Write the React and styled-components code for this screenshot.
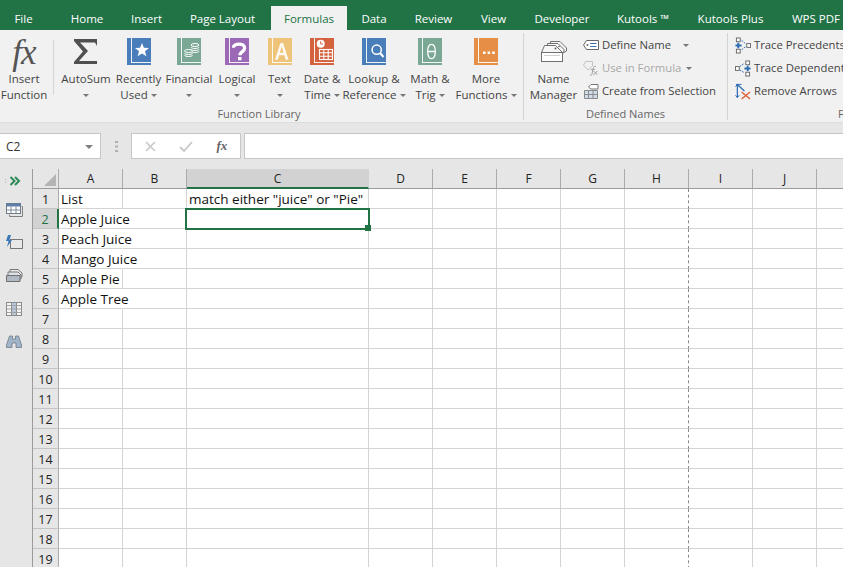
import React from "react";
import styled, { createGlobalStyle } from "styled-components";

const Global = createGlobalStyle`
  html, body { margin: 0; padding: 0; width: 843px; height: 567px; overflow: hidden; background: #fff; }
  * { box-sizing: border-box; }
  #root { width: 843px; height: 567px; overflow: hidden; }
`;
const ui = `"Open Sans", "Noto Sans", sans-serif`;

const Page = styled.div`width: 843px; height: 567px; display: flex; flex-direction: column; overflow: hidden; font-family: ${ui}; color: #444;`;

const TabBar = styled.div`height: 30px; flex: none; background: #217346; display: flex; align-items: flex-end; overflow: hidden;`;
const Tab = styled.div`
  flex: none; width: ${p => p.$w}px; height: ${p => (p.$active ? 24 : 30)}px; margin-right: ${p => p.$mr || 0}px;
  display: flex; align-items: center; justify-content: center; white-space: nowrap; font-size: 11.5px;
  padding-top: ${p => (p.$active ? 0 : p.$file ? 7 : 6)}px;
  color: ${p => (p.$active ? "#217346" : "#fff")}; background: ${p => (p.$active ? "#f1f1f1" : "transparent")};
`;

const Ribbon = styled.div`height: 93px; flex: none; background: #f1f1f1; border-bottom: 1px solid #dcdcdc; display: flex;`;
const Group = styled.div`flex: none; width: ${p => p.$w}px; min-width: 0; display: flex; flex-direction: column; border-right: ${p => (p.$sep ? "1px solid #d4d4d4" : "none")}; margin: 3px 0 2px;`;
const GroupBody = styled.div`height: 75px; flex: none; display: flex;`;
const GroupLabel = styled.div`font-size: 11px; line-height: 12px; color: #666; text-align: ${p => (p.$left ? "left" : "center")}; padding-left: ${p => p.$pl || 0}px; padding-right: ${p => p.$pr || 0}px; white-space: nowrap;`;
const Stack = styled.div`flex: none; display: flex; flex-direction: column; width: ${p => p.$w}px;`;
const Big = styled.div`flex: none; width: ${p => p.$w}px; display: flex; flex-direction: column; align-items: center; font-size: 11.5px; line-height: 16px; color: #444; white-space: nowrap;`;
const BigIcon = styled.div`height: 38px; padding-top: ${p => p.$top || 5}px; flex: none; display: flex; align-items: flex-start; justify-content: center;`;
const FxGlyph = styled.span`font-family: "Liberation Serif", serif; font-style: italic; font-size: 35px; line-height: 30px; color: #555; letter-spacing: -1px;`;
const Divider = styled.div`flex: none; width: 1px; height: 55px; margin: 7px 5px 0 5px; background: #d4d4d4;`;
const Line = styled.div`height: 16px; display: flex; align-items: center; gap: 3px;`;
const Caret = styled.span`display: inline-block; width: 0; height: 0; border-left: 3px solid transparent; border-right: 3px solid transparent; border-top: 3px solid #777; margin-top: 1px;`;
const NameCaret = styled(Caret)`border-left-width: 4px; border-right-width: 4px; border-top-width: 4px; border-top-color: #808080;`;
const SmallRow = styled.div`height: 23px; display: flex; align-items: center; font-size: 11.3px; white-space: nowrap; gap: 3px; padding-left: ${p => p.$pl || 0}px; color: ${p => (p.$off ? "#a8a8a8" : "#444")};`;
const SmallIcon = styled.span`width: 16px; height: 16px; flex: none; display: flex;`;
const SmallCaret = styled(Caret)`margin-left: ${p => p.$ml || 2}px;`;

const FormulaBar = styled.div`height: 46px; flex: none; background: #e6e6e6; display: flex; align-items: flex-start; padding-top: 10px;`;
const NameBox = styled.div`width: 101px; height: 26px; flex: none; background: #fff; border: 1px solid #c6c6c6; border-left: none; display: flex; align-items: center; justify-content: space-between; padding: 0 7px 0 6px; font-size: 12px; color: #333;`;
const Grip = styled.div`width: 30px; flex: none; height: 26px; display: flex; align-items: center; justify-content: center;`;
const FxButtons = styled.div`width: 110px; height: 26px; flex: none; background: #fff; border: 1px solid #c6c6c6; display: flex; align-items: center; justify-content: space-around; padding: 0 1px;`;
const FxSmall = styled.span`font-family: "Liberation Serif", serif; font-style: italic; font-weight: bold; font-size: 13px; color: #666;`;
const FormulaInput = styled.div`flex: 1; height: 26px; margin-left: 3px; background: #fff; border: 1px solid #c6c6c6; border-right: none;`;

const Main = styled.div`flex: 1; display: flex; min-height: 0;`;
const Side = styled.div`width: 33px; flex: none; background: #e6e6e6; border-right: 1px solid #9b9b9b; display: flex; flex-direction: column; align-items: center;`;
const SideIcon = styled.div`height: ${p => p.$h || 33}px; flex: none; display: flex; align-items: center; justify-content: center; padding-right: 4px;`;
const Sheet = styled.div`flex: 1; overflow: hidden; font-family: ${ui}; background: #fff;`;
const Row = styled.div`display: flex; height: 20px;`;
const Corner = styled.div`width: 26px; flex: none; height: 20px; background: #e6e6e6; border-right: 1px solid #ababab; border-bottom: 1px solid #9b9b9b; display: flex; justify-content: flex-end; align-items: flex-end; padding: 0 2px 2px 0;`;
const ColHead = styled.div`
  flex: none; width: ${p => p.$w}px; height: 20px; display: flex; align-items: center; justify-content: center; font-size: 12px; color: #222;
  background: ${p => (p.$sel ? "#d2d2d2" : "#e6e6e6")};
  border-right: 1px solid ${p => (p.$sel ? "#d2d2d2" : "#ababab")};
  border-bottom: ${p => (p.$sel ? "2px solid #217346" : "1px solid #9b9b9b")};
`;
const RowHead = styled.div`
  width: 26px; flex: none; height: 20px; display: flex; align-items: center; justify-content: center; font-size: 12.5px; padding-top: 1px;
  color: ${p => (p.$sel ? "#217346" : "#222")}; background: ${p => (p.$sel ? "#d2d2d2" : "#e6e6e6")};
  border-right: ${p => (p.$sel ? "2px solid #217346" : "1px solid #ababab")}; border-bottom: 1px solid #c4c4c4;
`;
const Cell = styled.div`
  flex: none; width: ${p => p.$w}px; height: 20px; position: relative; font-size: 13.5px; line-height: 20px; padding-left: 2px; white-space: nowrap; color: #111;
  border-bottom: 1px solid #d4d4d4;
  border-right: ${p => (p.$spill ? "1px solid transparent" : p.$brk ? "1px dashed #8a8a8a" : "1px solid #d4d4d4")};
`;
const Selection = styled.div`position: absolute; left: -2px; top: -1px; right: -2px; bottom: -2px; border: 2px solid #217346; z-index: 2;`;
const Handle = styled.div`position: absolute; right: -3px; bottom: -3px; width: 6px; height: 6px; background: #217346;`;

const Book = ({ c, children }) => (
  <svg width="24" height="27" viewBox="0 0 24 27">
    <rect x="0" y="0" width="24" height="27" fill={c} />
    <rect x="4" y="0" width="1" height="25" fill="#fff" opacity=".9" />
    <rect x="4" y="24" width="20" height="1" fill="#fff" opacity=".9" />
    {children}
  </svg>
);
const Sigma = () => (
  <svg width="25" height="27" viewBox="1 0 25 27">
    <path d="M1 1H24V8L22 4.5H7L15 13L6 23H24V26H1V24L10 13.5L1 3Z" fill="#505050" />
  </svg>
);
const Star = () => <polygon points="15,5 16.9,9.8 22,10.1 18,13.3 19.4,18.3 15,15.5 10.6,18.3 12,13.3 8,10.1 13.1,9.8" fill="#fff" />;
const Coins = () => (
  <g fill="none" stroke="#fff" strokeWidth="1" transform="translate(0.5 3.5)">
    <ellipse cx="17.5" cy="3.5" rx="4" ry="1.5" />
    <path d="M13.5 5.5c0 2 8 2 8 0M13.5 7.5c0 2 8 2 8 0M13.5 9.5c0 2 8 2 8 0" />
    <ellipse cx="11" cy="9.5" rx="4" ry="1.5" fill="#7aa895" />
    <path d="M7 11.5c0 2 8 2 8 0M7 13.5c0 2 8 2 8 0" />
  </g>
);
const Q = () => (
  <g transform="translate(-3.5 1.5) scale(1.25)">
    <path d="M9.5 6.5C9.5 2.8 18.5 2.4 18.5 6.8C18.5 9.8 14.8 9.6 14.8 12.5" fill="none" stroke="#fff" strokeWidth="2.6" />
    <rect x="13.2" y="14" width="2.8" height="2.6" fill="#fff" />
  </g>
);
const LetterA = () => <path transform="translate(-6 1) scale(1.3)" d="M10 16L14.2 3H16.2L20.4 16H18.2L17.2 12.5H13.1L12.2 16ZM13.7 10.6H16.6L15.2 5.8Z" fill="#fff" opacity=".9" />;
const Calendar = () => (
  <g>
    <circle cx="10.7" cy="5.7" r="4" fill="#fff" />
    <path d="M10.7 3.2V6H13" stroke="#d4623f" fill="none" strokeWidth="1" />
    <g fill="none" stroke="#fff" strokeWidth="1.1">
      <rect x="9.5" y="11.5" width="13" height="10" />
      <path d="M13.8 11.5V21.5M18.2 11.5V21.5M9.5 14.8H22.5M9.5 18.2H22.5" />
    </g>
  </g>
);
const Lens = () => (
  <g fill="none" stroke="#fff" strokeWidth="1.5">
    <circle cx="14.7" cy="11.7" r="4.6" />
    <path d="M18 15L21.5 19" strokeWidth="2" />
  </g>
);
const Theta = () => <path d="M13.5 6.3C10.8 6.3 9.7 9 9.7 13.5S10.8 20.7 13.5 20.7S17.3 18 17.3 13.5S16.2 6.3 13.5 6.3ZM9.9 13.5H17.1" fill="none" stroke="#fff" strokeWidth="1.3" />;
const Dots = () => <path d="M9 13.5h2.6v2.6H9zM13.6 13.5h2.6v2.6h-2.6zM18.2 13.5h2.6v2.6h-2.6z" fill="#fff" />;

const NameManagerIcon = () => (
  <svg width="28" height="23" viewBox="0 0 28 23">
    <g fill="#f6f6f6" stroke="#707070" strokeWidth="1">
      <path d="M10.5 1.5H20L26.5 8V11L23 13H10Z" />
      <path d="M7.5 3.5H18L24 9.5V12L20 14H7Z" />
      <path d="M4.5 5.5H15.5L22.5 12.5H1.5Z" />
      <rect x="1.5" y="12.5" width="21" height="9" fill="#fff" />
    </g>
    <circle cx="15.5" cy="8.5" r="1" fill="#666" />
    <circle cx="19" cy="6.5" r=".8" fill="#666" />
    <path d="M4 15.5H20" stroke="#d0d0d0" />
  </svg>
);
const DefineIcon = () => (
  <svg width="16" height="16" viewBox="0 0 16 16">
    <path d="M3.5 3.5H15.5V12.5H3.5L.5 8Z" fill="#fff" stroke="#666" />
    <circle cx="4.5" cy="8" r="1" fill="#666" />
    <path d="M7 6.5H13.5M7 9.5H13.5" stroke="#3f6ea8" />
  </svg>
);
const UseIcon = () => (
  <svg width="16" height="16" viewBox="0 0 16 16">
    <path d="M2.5 1.5H9.5V6L5 10L.5 5Z" fill="none" stroke="#c2c2c2" />
    <path d="M13 6.5C11 6 10.5 7 10 9L9 14C8.7 15.3 8 15.5 6.8 15M8 9.5H12M10.5 11L14.5 15M14.5 11L10.5 15" fill="none" stroke="#a0a0a0" />
  </svg>
);
const CreateIcon = () => (
  <svg width="16" height="16" viewBox="0 0 16 16">
    <path d="M1.5 15.5V7.5H14.5V15.5Z" fill="#cfdcec" stroke="#8a8a8a" />
    <path d="M1.5 11.5H14.5M5.5 7.5V15.5M10 7.5V15.5" stroke="#8a8a8a" />
    <path d="M5.5 4L8 1.5H15V6H8Z" fill="#fff" stroke="#777" />
  </svg>
);
const TraceP = () => (
  <svg width="17" height="17" viewBox="0 0 17 17">
    <g fill="#fff" stroke="#666"><rect x="1.5" y=".5" width="4" height="4" /><rect x="1.5" y="12.5" width="4" height="4" /><rect x="12.5" y="6.5" width="4" height="4" /></g>
    <path d="M.5 8.5H7M3.5 5.5V11.5" stroke="#2b6cb5" strokeWidth="2" />
    <path d="M7 3L11 6.5M7 13L11 10" stroke="#2b6cb5" strokeDasharray="2 1" />
  </svg>
);
const TraceD = () => (
  <svg width="17" height="17" viewBox="0 0 17 17">
    <g fill="#fff" stroke="#666"><rect x="11.5" y=".5" width="4" height="4" /><rect x="11.5" y="12.5" width="4" height="4" /><rect x=".5" y="6.5" width="4" height="4" /></g>
    <path d="M10 8.5H16.5M13.5 5.5V11.5" stroke="#2b6cb5" strokeWidth="2" />
    <path d="M5 6.5L10 3M5 10L10 13" stroke="#2b6cb5" strokeDasharray="2 1" />
  </svg>
);
const RemoveIcon = () => (
  <svg width="17" height="17" viewBox="0 0 17 17">
    <path d="M2.5 1V15M2.5 1L10 8" stroke="#2b6cb5" strokeWidth="1.3" fill="none" />
    <path d="M.5 3.5L2.5 1L4.5 3.5M.5 12.5L2.5 15L4.5 12.5M1 1H7" stroke="#2b6cb5" fill="none" />
    <path d="M7 9L16 16.5M16 9L7 16.5" stroke="#e0623a" strokeWidth="1.6" />
  </svg>
);

const Chevrons = () => (
  <svg width="18" height="10" viewBox="0 0 18 10">
    <path d="M0 3h1v1H0zM0 6h1v1H0z" fill="#b5b5b5" />
    <path d="M5.5 1L9.5 5L5.5 9M10 1L14 5L10 9" fill="none" stroke="#2b8a57" strokeWidth="2" />
  </svg>
);
const SideTable = () => (
  <svg width="17" height="14" viewBox="0 0 17 14">
    <rect x=".5" y=".5" width="14" height="10" fill="#fff" stroke="#6d7a8a" />
    <rect x=".5" y=".5" width="14" height="3" fill="#5f7fa8" />
    <path d="M.5 7H14.5M5 3.5V10.5M10 3.5V10.5" stroke="#7d8a9a" />
    <path d="M15.5 3.5H16.5V13.5H3.5V11.5" fill="none" stroke="#808080" />
  </svg>
);
const SideFormula = () => (
  <svg width="18" height="15" viewBox="0 0 18 15">
    <rect x="5.5" y="4.5" width="12" height="9" fill="#e8e8e8" stroke="#777" />
    <path d="M6 0H3L1 6H3.5L2 12L7 5H4.5L6 0Z" fill="#3a78b8" />
  </svg>
);
const SideStack = () => (
  <svg width="17" height="13" viewBox="0 0 17 13">
    <path d="M4 .5H12L16 4V8H4Z" fill="#e8e8e8" stroke="#777" />
    <path d="M2 3H12L15 6V10H2Z" fill="#dde1e6" stroke="#777" />
    <path d="M.5 6.5H14V12.5H.5Z" fill="#b0b8c4" stroke="#6f6f6f" />
  </svg>
);
const SideCols = () => (
  <svg width="16" height="14" viewBox="0 0 16 14">
    <rect x=".5" y=".5" width="15" height="13" fill="#f4f4f4" stroke="#8a8a8a" />
    <rect x="5.5" y=".5" width="5" height="13" fill="#b8c8dc" stroke="#8a8a8a" />
    <path d="M.5 3.5H15.5M.5 7H15.5M.5 10.5H15.5" stroke="#a0a0a0" />
  </svg>
);
const SideBino = () => (
  <svg width="16" height="13" viewBox="0 0 16 13">
    <path d="M3.5 1H6.5V4H9.5V1H12.5L15.5 10V12.5H10V8H6V12.5H.5V10Z" fill="#a0b4ca" stroke="#6f7a87" strokeWidth=".8" />
  </svg>
);

const tabs = [
  ["File", 47, 8], ["Home", 64], ["Insert", 55], ["Page Layout", 97], ["Formulas", 76, 0, true],
  ["Data", 54], ["Review", 65], ["View", 55], ["Developer", 82], ["Kutools ™", 80], ["Kutools Plus", 95], ["WPS PDF", 76],
];
const library = [
  [54, <Sigma />, "AutoSum", ""],
  [51, <Book c="#4a7ebb"><Star /></Book>, "Recently", "Used"],
  [50, <Book c="#7aa895"><Coins /></Book>, "Financial", ""],
  [46, <Book c="#9b69b5"><Q /></Book>, "Logical", ""],
  [39, <Book c="#eec47a"><LetterA /></Book>, "Text", ""],
  [46, <Book c="#d4623f"><Calendar /></Book>, "Date &", "Time"],
  [58, <Book c="#4a7ebb"><Lens /></Book>, "Lookup &", "Reference"],
  [54, <Book c="#7aa895"><Theta /></Book>, "Math &", "Trig"],
  [58, <Book c="#e68e45"><Dots /></Book>, "More", "Functions"],
];
const cols = [["A", 64], ["B", 64], ["C", 182], ["D", 64], ["E", 64], ["F", 64], ["G", 64], ["H", 64], ["I", 64], ["J", 64], ["", 64]];
const data = { 1: { A: "List", C: 'match either "juice" or "Pie"' }, 2: { A: "Apple Juice" }, 3: { A: "Peach Juice" }, 4: { A: "Mango Juice" }, 5: { A: "Apple Pie" }, 6: { A: "Apple Tree" } };
const spills = { 2: 1, 3: 1, 4: 1, 6: 1 };
const rows = Array.from({ length: 19 }, (_, i) => i + 1);

export default function App() {
  return (
    <Page>
      <Global />
      <TabBar>
        {tabs.map(([t, w, mr, active]) => (
          <Tab key={t} $w={w} $mr={mr} $active={active} $file={t === "File"}>{t}</Tab>
        ))}
      </TabBar>
      <Ribbon>
        <Group $w={524} $sep>
          <GroupBody>
            <Big $w={48}>
              <BigIcon><FxGlyph>fx</FxGlyph></BigIcon>
              <Line>Insert</Line>
              <Line>Function</Line>
            </Big>
            <Divider />
            {library.map(([w, icon, a, b]) => (
              <Big key={a} $w={w}>
                <BigIcon>{icon}</BigIcon>
                <Line>{a}</Line>
                <Line>{b}<Caret /></Line>
              </Big>
            ))}
          </GroupBody>
          <GroupLabel $pr={5}>Function Library</GroupLabel>
        </Group>
        <Group $w={204} $sep>
          <GroupBody>
            <Big $w={59}>
              <BigIcon $top={7}><NameManagerIcon /></BigIcon>
              <Line>Name</Line>
              <Line>Manager</Line>
            </Big>
            <Stack $w={144}>
              <SmallRow><SmallIcon><DefineIcon /></SmallIcon>Define Name<SmallCaret $ml={9} /></SmallRow>
              <SmallRow $off><SmallIcon><UseIcon /></SmallIcon>Use in Formula<SmallCaret /></SmallRow>
              <SmallRow><SmallIcon><CreateIcon /></SmallIcon>Create from Selection</SmallRow>
            </Stack>
          </GroupBody>
          <GroupLabel>Defined Names</GroupLabel>
        </Group>
        <Group $w={115}>
          <GroupBody>
            <Stack $w={115}>
              <SmallRow $pl={7}><SmallIcon><TraceP /></SmallIcon>Trace Precedents</SmallRow>
              <SmallRow $pl={7}><SmallIcon><TraceD /></SmallIcon>Trace Dependents</SmallRow>
              <SmallRow $pl={7}><SmallIcon><RemoveIcon /></SmallIcon>Remove Arrows</SmallRow>
            </Stack>
          </GroupBody>
          <GroupLabel $left $pl={110}>Formula Auditing</GroupLabel>
        </Group>
      </Ribbon>
      <FormulaBar>
        <NameBox>C2<NameCaret /></NameBox>
        <Grip>
          <svg width="3" height="11" viewBox="0 0 3 11"><path d="M0 0h3v2H0zM0 4.5h3v2H0zM0 9h3v2H0z" fill="#b0b0b0" /></svg>
        </Grip>
        <FxButtons>
          <svg width="11" height="11" viewBox="0 0 11 11"><path d="M1 1L10 10M10 1L1 10" stroke="#c8c8c8" strokeWidth="1.6" /></svg>
          <svg width="14" height="11" viewBox="0 0 14 11"><path d="M1 6L5 10L13 1" fill="none" stroke="#c8c8c8" strokeWidth="1.8" /></svg>
          <FxSmall>fx</FxSmall>
        </FxButtons>
        <FormulaInput />
      </FormulaBar>
      <Main>
        <Side>
          <SideIcon $h={24}><Chevrons /></SideIcon>
          <SideIcon><SideTable /></SideIcon>
          <SideIcon><SideFormula /></SideIcon>
          <SideIcon><SideStack /></SideIcon>
          <SideIcon><SideCols /></SideIcon>
          <SideIcon><SideBino /></SideIcon>
        </Side>
        <Sheet>
          <Row>
            <Corner>
              <svg width="12" height="12" viewBox="0 0 12 12"><path d="M12 0V12H0Z" fill="#b4b4b4" /></svg>
            </Corner>
            {cols.map(([c, w]) => <ColHead key={c} $w={w} $sel={c === "C"}>{c}</ColHead>)}
          </Row>
          {rows.map(r => (
            <Row key={r}>
              <RowHead $sel={r === 2}>{r}</RowHead>
              {cols.map(([c, w]) => (
                <Cell key={c} $w={w} $spill={c === "A" && spills[r]} $brk={c === "H"}>
                  {data[r]?.[c]}
                  {r === 2 && c === "C" && <Selection><Handle /></Selection>}
                </Cell>
              ))}
            </Row>
          ))}
        </Sheet>
      </Main>
    </Page>
  );
}
